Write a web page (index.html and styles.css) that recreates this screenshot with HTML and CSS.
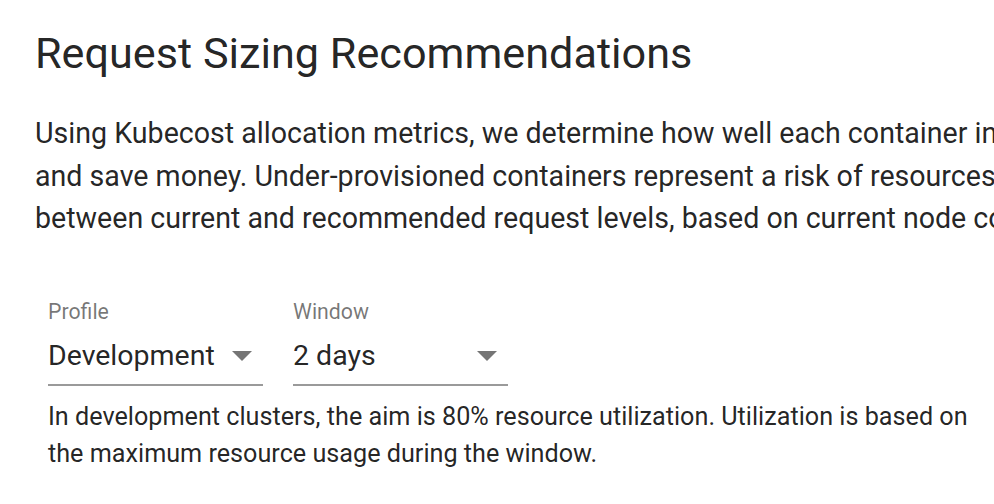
FILE: index.html
```html
<!DOCTYPE html>
<html>
<head>
<meta charset="utf-8">
<link rel="stylesheet" href="styles.css">
</head>
<body>
<div class="page">
  <h1 class="title">Request Sizing Recommendations</h1>
  <p class="intro">
    <span class="line">Using Kubecost allocation metrics, we determine how well each container in your cluster is utilizing its requested resources. Over-provisioned containers can be right-sized</span>
    <span class="line">and save money. Under-provisioned containers represent a risk of resources starvation. The table below shows the difference</span>
    <span class="line">between current and recommended request levels, based on current node costs.</span>
  </p>
  <div class="controls">
    <div class="fields">
      <div class="field">
        <div class="label">Profile</div>
        <div class="select">
          <span class="value">Development</span>
          <svg class="arrow" viewBox="0 0 20 10" width="20" height="10"><path d="M0 0 L20 0 L10 10 Z" fill="#757575"/></svg>
        </div>
      </div>
      <div class="field">
        <div class="label">Window</div>
        <div class="select">
          <span class="value">2 days</span>
          <svg class="arrow" viewBox="0 0 20 10" width="20" height="10"><path d="M0 0 L20 0 L10 10 Z" fill="#757575"/></svg>
        </div>
      </div>
    </div>
    <p class="helper">In development clusters, the aim is 80% resource utilization. Utilization is based on<br>the maximum resource usage during the window.</p>
  </div>
</div>
</body>
</html>
```
FILE: styles.css
```css
html, body {
  margin: 0;
  padding: 0;
  background: #ffffff;
  overflow: hidden;
}
body {
  font-family: Roboto, "Liberation Sans", Arial, sans-serif;
  color: rgba(0, 0, 0, 0.87);
}
.page {
  padding: 29px 0 0 35px;
}
.title {
  margin: 0;
  font-weight: 400;
  font-size: 43.2px;
  line-height: 50px;
  letter-spacing: 0;
}
.intro {
  margin: 33px 0 0 0;
  font-size: 28.6px;
  line-height: 42.5px;
  white-space: nowrap;
}
.line {
  display: block;
}
.controls {
  margin: 60px 0 0 13px;
}
.fields {
  display: flex;
  gap: 30px;
}
.field {
  width: 215px;
}
.label {
  font-size: 21.3px;
  line-height: 24px;
  color: rgba(0, 0, 0, 0.54);
}
.select {
  display: flex;
  align-items: center;
  justify-content: space-between;
  padding: 12px 11px 8px 0;
  border-bottom: 2px solid #9a9a9a;
}
.value {
  font-size: 28.5px;
  line-height: 40px;
}
.arrow {
  display: block;
}
.helper {
  margin: 12px 0 0 0;
  font-size: 25.2px;
  line-height: 37px;
  color: rgba(0, 0, 0, 0.87);
}
```
